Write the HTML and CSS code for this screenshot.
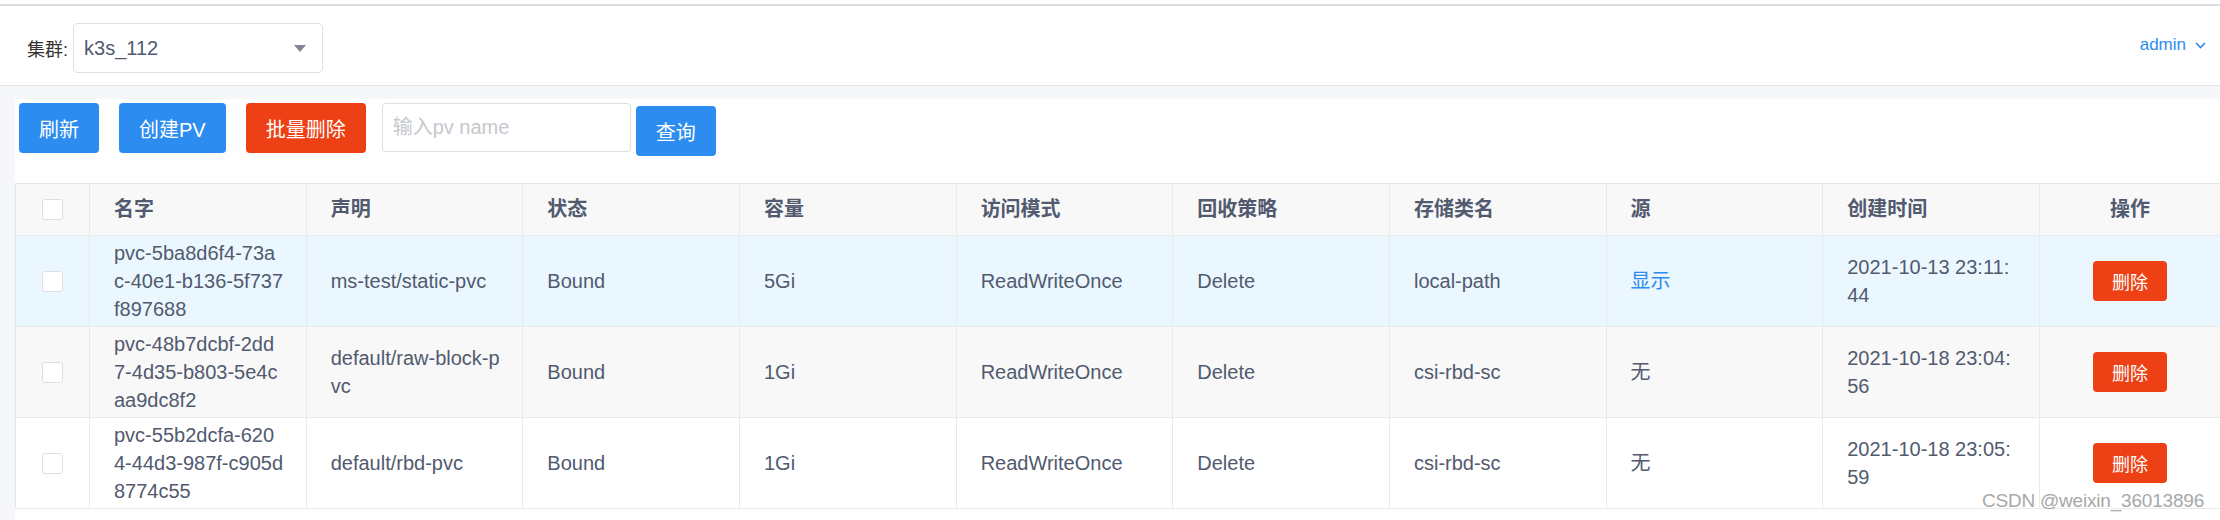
FILE: index.html
```html
<!DOCTYPE html>
<html lang="zh">
<head>
<meta charset="utf-8">
<title>PV</title>
<link rel="stylesheet" href="styles.css">
</head>
<body>
<div class="app">
  <header class="header">
    <div class="cluster">
      <span class="cluster-label">集群:</span>
      <div class="select">
        <span class="select-value">k3s_112</span>
        <svg class="select-arrow" width="12" height="7" viewBox="0 0 12 7"><polygon points="0,0 12,0 6,7" fill="#808695"/></svg>
      </div>
    </div>
    <div class="user">
      <span>admin</span>
      <svg class="user-arrow" width="11" height="7" viewBox="0 0 11 7"><polyline points="1,1 5.5,5.5 10,1" fill="none" stroke="#2d8cf0" stroke-width="1.7"/></svg>
    </div>
  </header>
  <main class="main">
    <section class="panel">
      <div class="toolbar">
        <button class="btn btn-primary btn-refresh">刷新</button>
        <button class="btn btn-primary btn-create">创建PV</button>
        <button class="btn btn-error btn-batch">批量删除</button>
        <input class="search" type="text" placeholder="输入pv name">
        <button class="btn btn-primary btn-query">查询</button>
      </div>
      <table class="table">
        <colgroup>
          <col class="c-check">
          <col class="c-data"><col class="c-data"><col class="c-data"><col class="c-data"><col class="c-data">
          <col class="c-data"><col class="c-data"><col class="c-data"><col class="c-data">
          <col class="c-action">
        </colgroup>
        <thead>
          <tr>
            <th class="check-cell"><span class="checkbox"></span></th>
            <th>名字</th>
            <th>声明</th>
            <th>状态</th>
            <th>容量</th>
            <th>访问模式</th>
            <th>回收策略</th>
            <th>存储类名</th>
            <th>源</th>
            <th>创建时间</th>
            <th class="center">操作</th>
          </tr>
        </thead>
        <tbody>
          <tr class="row-hover">
            <td class="check-cell"><span class="checkbox"></span></td>
            <td>pvc-5ba8d6f4-73a<br>c-40e1-b136-5f737<br>f897688</td>
            <td>ms-test/static-pvc</td>
            <td>Bound</td>
            <td>5Gi</td>
            <td>ReadWriteOnce</td>
            <td>Delete</td>
            <td>local-path</td>
            <td><a class="link">显示</a></td>
            <td>2021-10-13 23:11:<br>44</td>
            <td class="center"><button class="btn-small">删除</button></td>
          </tr>
          <tr class="row-stripe">
            <td class="check-cell"><span class="checkbox"></span></td>
            <td>pvc-48b7dcbf-2dd<br>7-4d35-b803-5e4c<br>aa9dc8f2</td>
            <td>default/raw-block-p<br>vc</td>
            <td>Bound</td>
            <td>1Gi</td>
            <td>ReadWriteOnce</td>
            <td>Delete</td>
            <td>csi-rbd-sc</td>
            <td>无</td>
            <td>2021-10-18 23:04:<br>56</td>
            <td class="center"><button class="btn-small">删除</button></td>
          </tr>
          <tr>
            <td class="check-cell"><span class="checkbox"></span></td>
            <td>pvc-55b2dcfa-620<br>4-44d3-987f-c905d<br>8774c55</td>
            <td>default/rbd-pvc</td>
            <td>Bound</td>
            <td>1Gi</td>
            <td>ReadWriteOnce</td>
            <td>Delete</td>
            <td>csi-rbd-sc</td>
            <td>无</td>
            <td>2021-10-18 23:05:<br>59</td>
            <td class="center"><button class="btn-small">删除</button></td>
          </tr>
        </tbody>
      </table>
    </section>
  </main>
  <div class="watermark">CSDN @weixin_36013896</div>
</div>
</body>
</html>
```

FILE: styles.css
```css
* { box-sizing: border-box; }
html, body {
  margin: 0;
  padding: 0;
  width: 2220px;
  height: 520px;
  overflow: hidden;
  background: #fff;
  font-family: "Liberation Sans", Arial, "Noto Sans CJK SC", sans-serif;
  color: #515a6e;
}
.app {
  position: relative;
  height: 520px;
  padding-top: 4px;
  display: flex;
  flex-direction: column;
  overflow: hidden;
}
.header {
  flex: 0 0 82px;
  height: 82px;
  border-top: 2px solid #dcdee2;
  border-bottom: 1px solid #e3e5e8;
  display: flex;
  justify-content: space-between;
  align-items: flex-start;
  padding: 17px 14px 0 27px;
  background: #fff;
}
.cluster {
  display: flex;
  align-items: center;
}
.cluster-label {
  font-size: 18px;
  color: #333;
  margin-right: 5px;
}
.select {
  width: 250px;
  height: 50px;
  border: 1px solid #dcdee2;
  border-radius: 5px;
  display: flex;
  align-items: center;
  justify-content: space-between;
  padding: 0 16px 0 10px;
}
.select-value {
  font-size: 20px;
  color: #515a6e;
}
.select-arrow { margin-top: 1px; }
.user {
  display: flex;
  align-items: center;
  gap: 9px;
  margin-top: 12px;
  font-size: 17px;
  color: #2d8cf0;
}
.main {
  flex: 1 1 auto;
  min-height: 0;
  background: #f5f7f9;
  padding: 13px 0 0 15px;
  display: flex;
  flex-direction: column;
}
.panel {
  flex: 1;
  background: #fff;
  padding-top: 4px;
}
.toolbar {
  display: flex;
  align-items: flex-start;
  padding-left: 4px;
}
.btn {
  height: 50px;
  border: none;
  border-radius: 4px;
  padding: 0 20px;
  font-family: inherit;
  font-size: 20px;
  color: #fff;
  cursor: pointer;
}
.btn-primary { background: #2d8cf0; }
.btn-error { background: #ed4014; }
.btn-refresh, .btn-create { margin-right: 20px; }
.btn-batch { margin-right: 16px; }
.search {
  width: 249px;
  height: 49px;
  border: 1px solid #dcdee2;
  border-radius: 4px;
  padding: 0 10px;
  font-family: inherit;
  font-size: 20px;
  color: #515a6e;
  outline: none;
  margin-right: 5px;
}
.search::placeholder { color: #c5c8ce; }
.btn-query { margin-top: 3px; }
.table {
  margin-top: 27px;
  width: 2205px;
  table-layout: fixed;
  border-collapse: separate;
  border-spacing: 0;
  border-top: 1px solid #e3e5e8;
  border-left: 1px solid #e3e5e8;
  font-size: 20px;
}
.c-check { width: 74px; }
.c-data { width: 216.67px; }
.c-action { width: 181px; }
th, td {
  text-align: left;
  border-right: 1px solid #e8eaec;
  border-bottom: 1px solid #e8eaec;
  vertical-align: middle;
  color: #515a6e;
  white-space: nowrap;
}
th {
  background: #f8f8f9;
  font-weight: bold;
  line-height: 51px;
  padding: 0 24px;
}
td {
  line-height: 28px;
  padding: 3px 24px;
}
th.center, td.center { text-align: center; padding: 0; }
th.check-cell, td.check-cell { padding: 0; text-align: center; }
.checkbox {
  display: block;
  width: 21px;
  height: 21px;
  margin: 0 auto;
  border: 1px solid #dcdee2;
  border-radius: 3px;
  background: #fff;
}
.row-hover td { background: #ebf7ff; }
.row-stripe td { background: #f8f8f9; }
.link { color: #2d8cf0; }
.btn-small {
  height: 40px;
  padding: 0 19px;
  border: none;
  border-radius: 4px;
  background: #ed4014;
  color: #fff;
  font-family: inherit;
  font-size: 18px;
  vertical-align: middle;
}
.watermark {
  position: absolute;
  right: 16px;
  bottom: 8px;
  font-size: 19px;
  color: #a8a8a8;
  text-shadow: 0 0 1px #fff;
  letter-spacing: -0.2px;
}
```
